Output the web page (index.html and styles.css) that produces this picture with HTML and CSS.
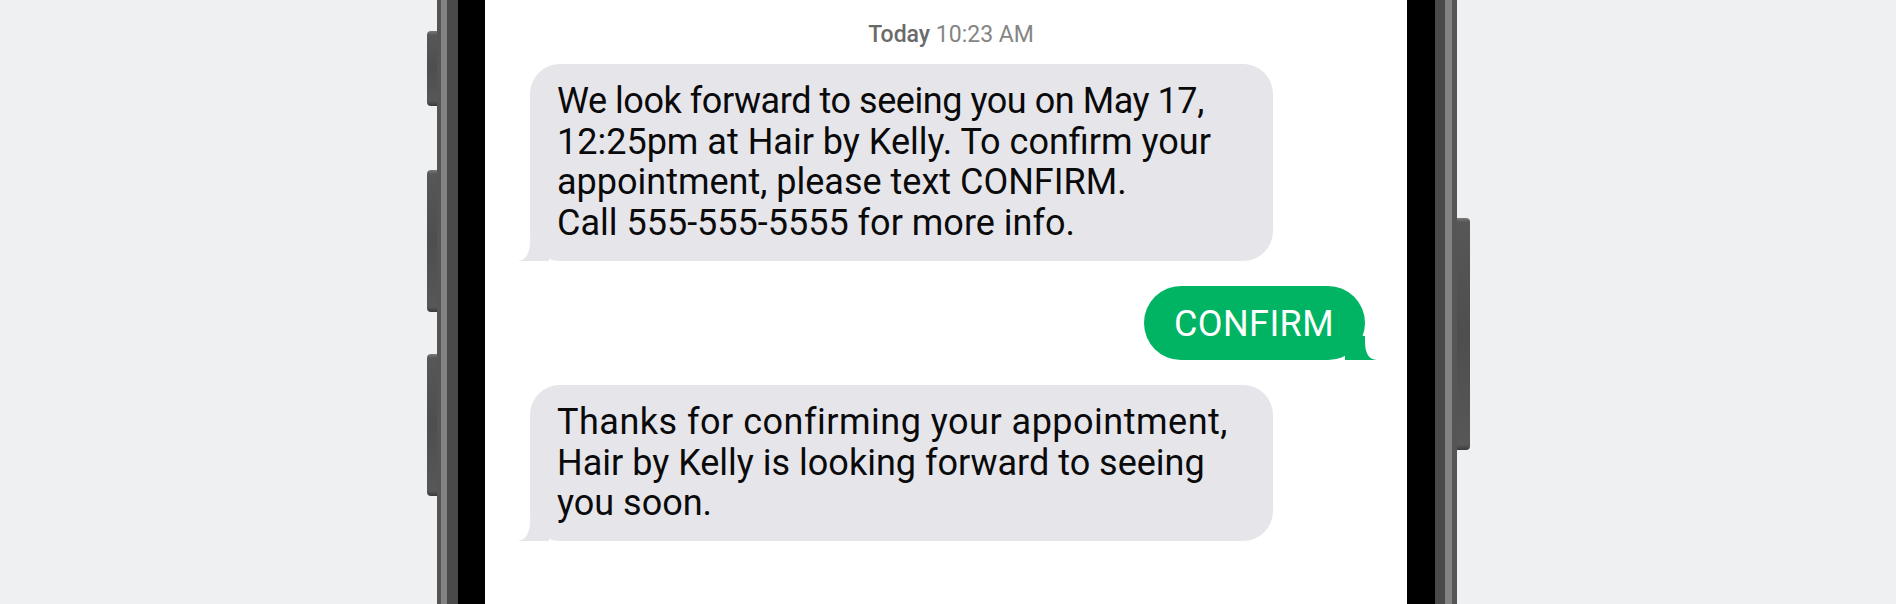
FILE: index.html
```html
<!DOCTYPE html>
<html lang="en">
<head>
<meta charset="utf-8">
<title>Messages</title>
<link rel="stylesheet" href="styles.css">
</head>
<body>
<div class="stage">
  <div class="phone">
    <span class="side-btn left b-1"></span>
    <span class="side-btn left b-2"></span>
    <span class="side-btn left b-3"></span>
    <span class="side-btn right b-4"></span>
    <div class="band band-outer">
      <div class="band band-light">
        <div class="band band-dark">
          <div class="bezel">
            <div class="screen">
              <div class="stamp"><span class="stamp-day">Today</span> 10:23 AM</div>
              <div class="msg msg-in">
                <span class="tight">We look forward to seeing you on May 17,</span><br>12:25pm at Hair by Kelly. To confirm your<br>appointment, please text CONFIRM.<br>Call 555-555-5555 for more info.
                <svg class="tail tail-in" width="32" height="26" viewBox="0 0 32 26"><path d="M0 26 C8 25.5 13 20 13 5 L13 0 L32 0 L32 26 Z"/></svg>
              </div>
              <div class="msg msg-out">
                CONFIRM
                <svg class="tail tail-out" width="32" height="24" viewBox="0 0 32 24"><path d="M32 24 C24 23.5 20 18 20 5 L20 0 L0 0 L0 24 Z"/></svg>
              </div>
              <div class="msg msg-in">
                <span class="wide">Thanks for confirming your appointment,</span><br>Hair by Kelly is looking forward to seeing<br>you soon.
                <svg class="tail tail-in" width="32" height="26" viewBox="0 0 32 26"><path d="M0 26 C8 25.5 13 20 13 5 L13 0 L32 0 L32 26 Z"/></svg>
              </div>
            </div>
          </div>
        </div>
      </div>
    </div>
  </div>
</div>
</body>
</html>
```

FILE: styles.css
```css
html, body {
  margin: 0;
  padding: 0;
}
body {
  background: #eff0f2;
  height: 604px;
  overflow: hidden;
  font-family: Roboto, "Liberation Sans", Arial, sans-serif;
}
.stage {
  display: flex;
  justify-content: center;
  height: 604px;
}
.phone {
  position: relative;
  display: flex;
  height: 604px;
  margin-right: 2px;
}
.band {
  display: flex;
  height: 100%;
}
.band-outer {
  background: #555555;
  padding: 0 5px 0 4px;
}
.band-light {
  background: #838383;
  padding: 0 7px 0 6px;
}
.band-dark {
  background: #4a4a4a;
  padding: 0 10px 0 11px;
}
.bezel {
  display: flex;
  background: #000;
  padding: 0 28px 0 27px;
}
.screen {
  width: 922px;
  background: #fff;
  box-sizing: border-box;
  padding: 22px 39px 0 45px;
  display: flex;
  flex-direction: column;
  align-items: flex-start;
}
.stamp {
  align-self: center;
  font-size: 23px;
  line-height: 26px;
  color: #858585;
  margin-left: 4px;
}
.stamp-day {
  font-weight: 500;
  color: #6a6a6a;
}
.msg {
  position: relative;
  font-size: 36px;
  line-height: 40.7px;
  white-space: nowrap;
}
.tight {
  letter-spacing: -0.45px;
}
.wide {
  letter-spacing: 0.5px;
}
.msg-in {
  margin-top: 16px;
  width: 743px;
  box-sizing: border-box;
  background: #e5e5ea;
  color: #0a0a0a;
  border-radius: 30px;
  padding: 17px 20px 17px 27px;
}
.msg-in + .msg-out {
  margin-top: 25px;
}
.msg-out + .msg-in {
  margin-top: 25px;
}
.msg-out {
  align-self: flex-end;
  background: #00b464;
  color: #fff;
  font-size: 36px;
  letter-spacing: 0.4px;
  line-height: 74px;
  height: 74px;
  box-sizing: border-box;
  padding: 1px 31px 0 30px;
  border-radius: 37px;
  margin-right: 3px;
}
.tail {
  position: absolute;
  bottom: 0;
  display: block;
}
.tail-in {
  left: -13px;
}
.tail-in path {
  fill: #e5e5ea;
}
.tail-out {
  right: -12px;
}
.tail-out path {
  fill: #00b464;
}
.side-btn {
  position: absolute;
  background: linear-gradient(to bottom, #7a7a7a 0, #575757 4px, #4e4e4e 50%, #575757 calc(100% - 5px), #3a3a3a 100%);
}
.side-btn.left {
  left: -10px;
  width: 10px;
  border-radius: 4px 0 0 4px;
}
.side-btn.right {
  right: -13px;
  width: 13px;
  border-radius: 0 4px 4px 0;
}
.b-1 { top: 31px; height: 75px; }
.b-2 { top: 170px; height: 142px; }
.b-3 { top: 354px; height: 142px; }
.b-4 { top: 218px; height: 232px; }
```
